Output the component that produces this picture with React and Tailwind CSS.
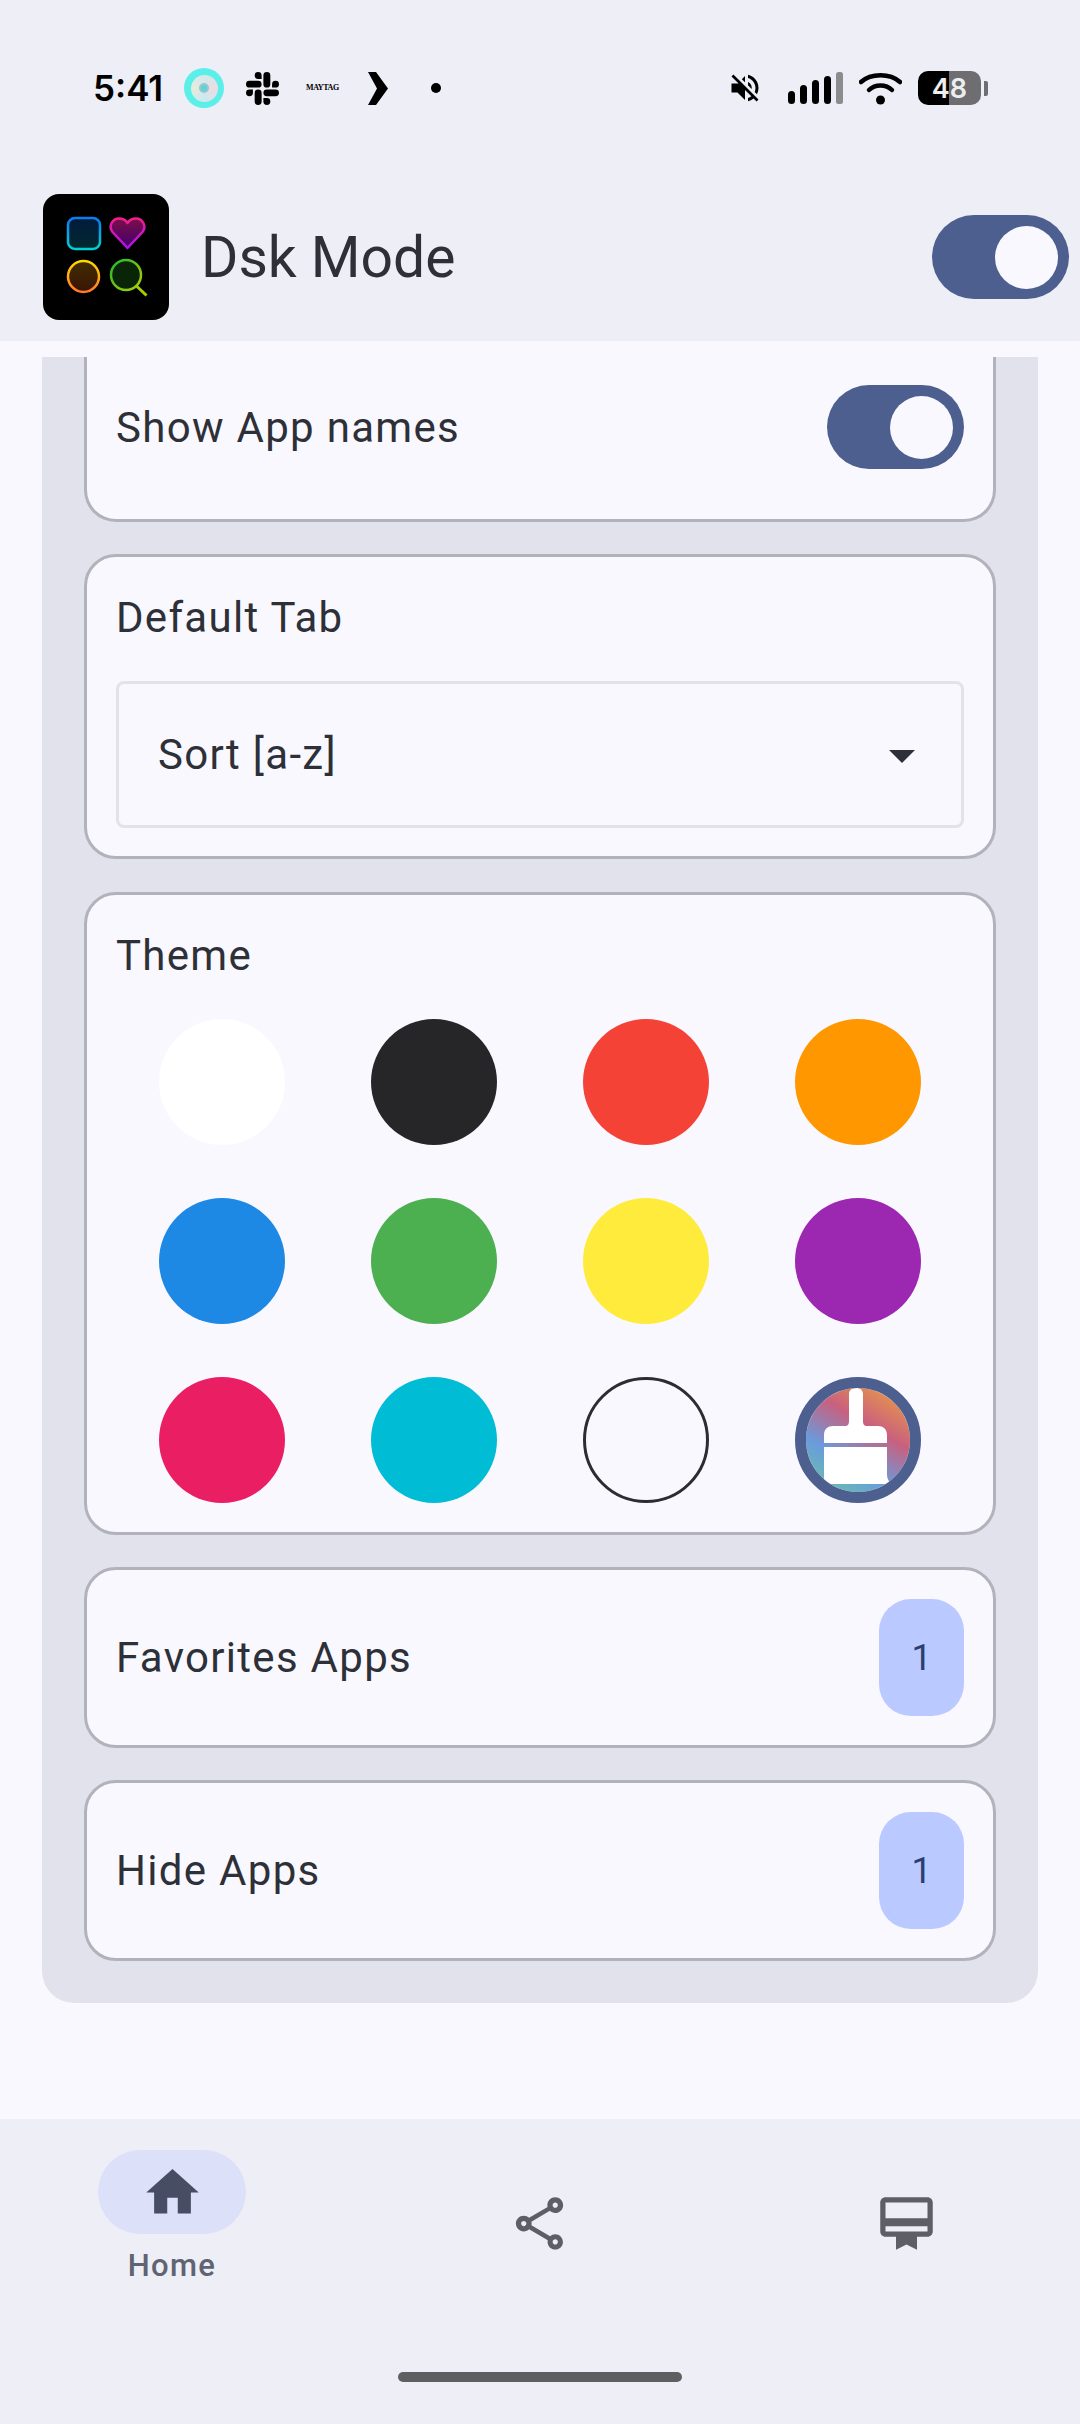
import { MdVolumeOff } from 'react-icons/md';
import { SiSlack } from 'react-icons/si';

const THEME_COLORS = [
  'bg-[#ffffff]',
  'bg-[#262628]',
  'bg-[#f44336]',
  'bg-[#ff9800]',
  'bg-[#1e88e5]',
  'bg-[#4caf50]',
  'bg-[#ffeb3b]',
  'bg-[#9c27b0]',
  'bg-[#e91e63]',
  'bg-[#00bcd4]',
];

function Toggle() {
  return (
    <div className="flex h-[84px] w-[137px] items-center justify-end rounded-full bg-[#4c5f8e] pr-[11px]">
      <div className="h-[63px] w-[63px] rounded-full bg-[#faf8ff]" />
    </div>
  );
}

function AppLogo() {
  return (
    <svg width="126" height="126" viewBox="0 0 126 126" className="shrink-0">
      <defs>
        <linearGradient id="sq" x1="0" y1="0" x2="0" y2="1">
          <stop offset="0" stopColor="#0a7cf0" />
          <stop offset="1" stopColor="#00d0d8" />
        </linearGradient>
        <linearGradient id="sqf" x1="0" y1="0" x2="0" y2="1">
          <stop offset="0" stopColor="#021a3c" />
          <stop offset="1" stopColor="#012a2e" />
        </linearGradient>
        <linearGradient id="he" x1="0" y1="0" x2="0" y2="1">
          <stop offset="0" stopColor="#f0208a" />
          <stop offset="1" stopColor="#b010f0" />
        </linearGradient>
        <linearGradient id="hef" x1="0" y1="0" x2="0" y2="1">
          <stop offset="0" stopColor="#7c0f48" />
          <stop offset="1" stopColor="#400070" />
        </linearGradient>
        <linearGradient id="ci" x1="0" y1="0" x2="0" y2="1">
          <stop offset="0" stopColor="#ffd800" />
          <stop offset="1" stopColor="#ff7a2a" />
        </linearGradient>
        <linearGradient id="cif" x1="0" y1="0" x2="0" y2="1">
          <stop offset="0" stopColor="#3f2c00" />
          <stop offset="1" stopColor="#3c1406" />
        </linearGradient>
        <linearGradient id="se" x1="0" y1="0" x2="1" y2="1">
          <stop offset="0" stopColor="#20b830" />
          <stop offset="1" stopColor="#b0d000" />
        </linearGradient>
      </defs>
      <rect width="126" height="126" rx="16" fill="#000" />
      <rect x="25" y="24" width="32" height="31" rx="7" fill="url(#sqf)" stroke="url(#sq)" strokeWidth="2.5" />
      <path
        d="M84.5 54 L69.5 38 C65 32 69.5 24.5 76 24.5 C80 24.5 83 26.5 84.5 29 C86 26.5 89 24.5 93 24.5 C99.5 24.5 104 32 99.5 38 Z"
        fill="url(#hef)"
        stroke="url(#he)"
        strokeWidth="2.5"
        strokeLinejoin="round"
      />
      <circle cx="40.5" cy="82.5" r="15.5" fill="url(#cif)" stroke="url(#ci)" strokeWidth="2.5" />
      <circle cx="83" cy="81" r="15" fill="#0a2408" stroke="url(#se)" strokeWidth="2.5" />
      <path d="M93.5 92 L103.5 101.5" stroke="#a8cc00" strokeWidth="3" />
    </svg>
  );
}

function StatusBar() {
  return (
    <div className="flex h-[40px] items-center pl-[93px]">
      <span className="w-[70px] font-['Inter',sans-serif] text-[35px] font-semibold leading-none text-black">5:41</span>
      <div className="ml-[21px] flex h-[40px] w-[40px] items-center justify-center rounded-full bg-[#5aefe8]">
        <div className="flex h-[27px] w-[27px] items-center justify-center rounded-full bg-[conic-gradient(#d4e8ec,#ecdce2,#cde8f0,#e4ecdc,#d4e8ec)]">
          <div className="h-[10px] w-[10px] rounded-full border-[2px] border-[#9fc4cc] bg-[#5ad5dc]" />
        </div>
      </div>
      <SiSlack className="ml-[22px] text-black" size={33} />
      <span className="ml-[27px] w-[28px] font-['Liberation_Serif',serif] text-[8px] font-bold leading-none tracking-[-0.4px] text-black">
        MAYTAG
      </span>
      <svg className="ml-[34px]" width="20" height="33" viewBox="0 0 20 33">
        <path d="M0 0 H8 L20 16.5 L8 33 H0 L9 16.5 Z" fill="#000" />
      </svg>
      <div className="ml-[43px] h-[10px] w-[10px] rounded-full bg-black" />

      <MdVolumeOff className="ml-[286px] text-black" size={36} />
      <svg className="ml-[25px]" width="55" height="32" viewBox="0 0 55 32">
        <rect x="0" y="19" width="7" height="13" rx="3.5" fill="#000" />
        <rect x="12" y="13" width="7" height="19" rx="3.5" fill="#000" />
        <rect x="24" y="8" width="7" height="24" rx="3.5" fill="#000" />
        <rect x="36" y="4" width="7" height="28" rx="3.5" fill="#000" />
        <rect x="48" y="0" width="7" height="32" rx="2.5" fill="#8c8c8e" />
      </svg>
      <svg className="ml-[16px]" width="43" height="33" viewBox="0 0 43 33">
        <path d="M2 10 C12 1 31 1 41 10" fill="none" stroke="#000" strokeWidth="4.5" strokeLinecap="round" />
        <path d="M10 18 C16 12 27 12 33 18" fill="none" stroke="#000" strokeWidth="4.5" strokeLinecap="round" />
        <circle cx="21.5" cy="28" r="4.5" fill="#000" />
      </svg>
      <div className="ml-[16px] flex h-[34px] w-[63px] items-center justify-center rounded-[10px] bg-[linear-gradient(90deg,#000_49%,#6e6d72_49%)] font-['Inter',sans-serif] text-[27px] font-semibold leading-none text-[#eeeeee]">
        48
      </div>
      <div className="ml-[3px] h-[15px] w-[4px] rounded-r-[2px] bg-[#6e6d72]" />
    </div>
  );
}

function PlainCard({ label }) {
  return (
    <div className="flex h-[181px] items-center justify-between rounded-[32px] border-[3px] border-[#b1b2bc] bg-[#faf8ff] pl-[29px] pr-[29px]">
      <span className="text-[42px] leading-none tracking-[1.3px] text-[#2e3038]">{label}</span>
      <div className="flex h-[117px] w-[85px] items-center justify-center rounded-[32px] bg-[#bac9ff] text-[36px] text-[#2a3f70]">
        1
      </div>
    </div>
  );
}

function BrushSwatch() {
  return (
    <svg width="126" height="126" viewBox="0 0 126 126">
      <defs>
        <linearGradient id="brushBg" x1="0.2" y1="1" x2="0.8" y2="0">
          <stop offset="0" stopColor="#68bfae" />
          <stop offset="0.3" stopColor="#6a9bdc" />
          <stop offset="0.65" stopColor="#c9607e" />
          <stop offset="1" stopColor="#e8964a" />
        </linearGradient>
        <clipPath id="brushClip">
          <circle cx="63" cy="63" r="52" />
        </clipPath>
      </defs>
      <circle cx="63" cy="63" r="52" fill="url(#brushBg)" />
      <g clipPath="url(#brushClip)" fill="#ffffff">
        <path d="M29 66 V58 C29 52 33 49 38 49 H50 C53 49 54 47 54 44 L54 17 C54 13 57 11 61 11 C65 11 68 13 68 17 L68 44 C68 47 69 49 72 49 H83 C88 49 92 52 92 58 V66 Z" />
        <path d="M29 70 H92 V98 C92 102 94 105 97 107 L29 107 Z" />
      </g>
      <circle cx="63" cy="63" r="57.5" fill="none" stroke="#4c5f8e" strokeWidth="11" />
    </svg>
  );
}

export default function App() {
  return (
    <div className="flex h-[2424px] w-[1080px] flex-col overflow-hidden bg-[#faf8ff] font-['Roboto',sans-serif]">
      {/* Status bar and app bar */}
      <div className="h-[341px] shrink-0 bg-[#edeef6] pt-[68px]">
        <StatusBar />
        <div className="mt-[86px] flex items-center pl-[43px] pr-[11px]">
          <AppLogo />
          <span className="ml-[32px] flex-1 text-[57px] leading-none text-[#2e3038]">Dsk Mode</span>
          <Toggle />
        </div>
      </div>

      {/* Settings list */}
      <div className="flex-1 px-[42px] pt-[16px]">
        <div className="flex flex-col gap-[32px] rounded-b-[32px] bg-[#e1e2ec] px-[42px] pb-[42px]">
          <div className="flex h-[165px] items-start justify-between rounded-b-[32px] border-x-[3px] border-b-[3px] border-[#b1b2bc] bg-[#faf8ff] pl-[29px] pr-[29px] pt-[28px]">
            <span className="mt-[22px] text-[42px] leading-none tracking-[1.3px] text-[#2e3038]">Show App names</span>
            <Toggle />
          </div>

          <div className="flex h-[305px] flex-col rounded-[32px] border-[3px] border-[#b1b2bc] bg-[#faf8ff] px-[29px] pt-[40px]">
            <span className="text-[42px] leading-none tracking-[1.3px] text-[#2e3038]">Default Tab</span>
            <div className="mt-[42px] flex h-[147px] items-center justify-between rounded-[8px] border-[3px] border-[#e3e2ea] pl-[39px] pr-[46px]">
              <span className="text-[42px] leading-none tracking-[1.3px] text-[#2e3038]">Sort [a-z]</span>
              <div className="mt-[4px] h-0 w-0 border-x-[13px] border-t-[13px] border-x-transparent border-t-[#2e3038]" />
            </div>
          </div>

          <div className="mt-px flex h-[643px] flex-col rounded-[32px] border-[3px] border-[#b1b2bc] bg-[#faf8ff] pt-[40px]">
            <span className="ml-[29px] text-[42px] leading-none tracking-[1.3px] text-[#2e3038]">Theme</span>
            <div className="ml-[29px] mt-[42px] grid w-[848px] grid-cols-4 gap-y-[53px]">
              {THEME_COLORS.map((color) => (
                <div key={color} className="flex justify-center">
                  <div className={`h-[126px] w-[126px] rounded-full ${color}`} />
                </div>
              ))}
              <div className="flex justify-center">
                <div className="h-[126px] w-[126px] rounded-full border-[3px] border-[#2b2d33]" />
              </div>
              <div className="flex justify-center">
                <BrushSwatch />
              </div>
            </div>
          </div>

          <PlainCard label="Favorites Apps" />
          <PlainCard label="Hide Apps" />
        </div>
      </div>

      {/* Bottom navigation */}
      <div className="h-[305px] shrink-0 bg-[#edeef6] pt-[31px]">
        <div className="flex items-start justify-between pl-[98px] pr-[100px]">
          <div className="flex w-[148px] flex-col items-center">
            <div className="flex h-[84px] w-[148px] items-center justify-center rounded-full bg-[#dce1f9]">
              <svg width="63" height="63" viewBox="0 0 24 24" fill="#474d63">
                <path d="M10 20v-6h4v6h5v-8h3L12 3 2 12h3v8z" />
              </svg>
            </div>
            <span className="mt-[16px] text-[31px] font-medium leading-none tracking-[1.3px] text-[#5f6372]">Home</span>
          </div>
          <div className="flex w-[148px] justify-center pt-[42px]">
            <svg width="63" height="63" viewBox="0 0 24 24" fill="#5d5e66">
              <path d="M18 16.08c-.76 0-1.44.3-1.96.77L8.91 12.7c.05-.23.09-.46.09-.7s-.04-.47-.09-.7l7.05-4.11c.54.5 1.25.81 2.04.81 1.66 0 3-1.34 3-3s-1.34-3-3-3-3 1.34-3 3c0 .24.04.47.09.7L8.04 9.81C7.5 9.31 6.79 9 6 9c-1.66 0-3 1.34-3 3s1.34 3 3 3c.79 0 1.5-.31 2.04-.81l7.12 4.16c-.05.21-.08.43-.08.65 0 1.61 1.31 2.92 2.92 2.92s2.92-1.31 2.92-2.92-1.31-2.92-2.92-2.92zM18 4c.55 0 1 .45 1 1s-.45 1-1 1-1-.45-1-1 .45-1 1-1zM6 13c-.55 0-1-.45-1-1s.45-1 1-1 1 .45 1 1-.45 1-1 1zm12 7.02c-.55 0-1-.45-1-1s.45-1 1-1 1 .45 1 1-.45 1-1 1z" />
            </svg>
          </div>
          <div className="flex w-[148px] justify-center pt-[42px]">
            <svg width="63" height="63" viewBox="0 0 24 24" fill="#5d5e66">
              <path d="M20 2H4c-1.11 0-2 .89-2 2v11c0 1.11.89 2 2 2h4v5l4-2 4 2v-5h4c1.11 0 2-.89 2-2V4c0-1.11-.89-2-2-2zm0 13H4v-2h16v2zm0-5H4V4h16v6z" />
            </svg>
          </div>
        </div>
        <div className="mx-auto mt-[91px] h-[10px] w-[284px] rounded-full bg-[#5f5f61]" />
      </div>
    </div>
  );
}
